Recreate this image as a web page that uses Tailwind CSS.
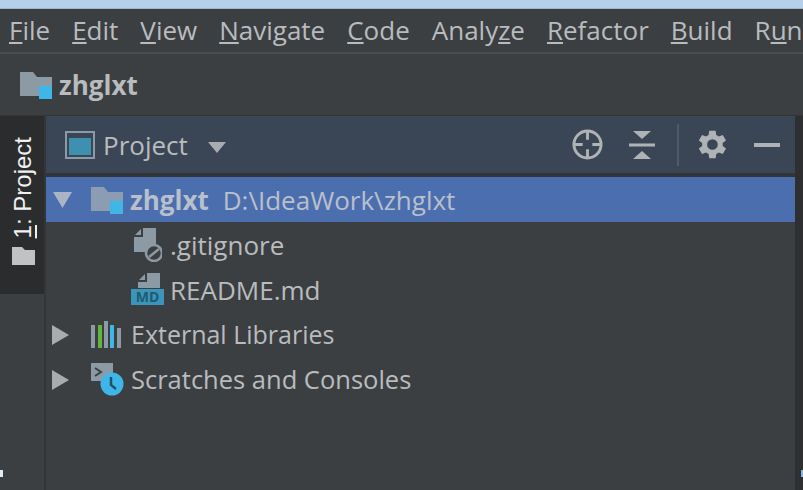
<!DOCTYPE html>
<html>
<head>
<title>zhglxt</title>
<script src="https://cdn.jsdelivr.net/npm/@tailwindcss/browser@4"></script>
</head>
<body class="relative w-[803px] h-[490px] overflow-hidden bg-[#3c3f41] font-['Open_Sans','Noto_Sans',sans-serif]">

<div class="h-[9px] bg-[#b7d0ea] border-b border-[#9fb6cc]"></div>

<!-- menu bar -->
<div class="h-[43px] pb-[2px] flex items-center pl-[9px] gap-[22px] text-[26px] leading-none text-[#b9bcbe] whitespace-nowrap overflow-hidden">
    <span><u class="underline-offset-2">F</u>ile</span>
    <span><u class="underline-offset-2">E</u>dit</span>
    <span><u class="underline-offset-2">V</u>iew</span>
    <span><u class="underline-offset-2">N</u>avigate</span>
    <span><u class="underline-offset-2">C</u>ode</span>
    <span>Analy<u class="underline-offset-2">z</u>e</span>
    <span><u class="underline-offset-2">R</u>efactor</span>
    <span><u class="underline-offset-2">B</u>uild</span>
    <span>R<u class="underline-offset-2">u</u>n</span>
</div>

<!-- nav bar -->
<div class="h-[64px] border-t-2 border-[#4a4c4e] flex items-center pl-[20px] gap-[5px] border-b border-b-[#323436]">
    <svg width="34" height="32" viewBox="0 0 34 32"><path d="M0 3h13l4 5h15v19H0z" fill="#8c9aa5"/><rect x="19" y="17" width="13" height="13" fill="#3fb6e8"/></svg>
    <span class="text-[26px] font-bold text-[#b9bcbe] leading-none">zhglxt</span>
</div>

<div class="flex h-[374px]">
    <!-- tool strip -->
    <div class="w-[46px] shrink-0 border-r-2 border-[#333537]">
        <div class="h-[178px] bg-[#2b2c2d] flex flex-col items-center justify-end pb-[29px] pl-[2px] gap-[9px]">
            <span class="[writing-mode:vertical-rl] rotate-180 font-['Liberation_Sans',sans-serif] text-[24px] leading-none text-[#f0f0f0] whitespace-nowrap"><u>1</u>: Project</span>
            <svg width="23" height="18" viewBox="0 0 23 18"><path d="M0 0h10l3 3h10v15H0z" fill="#c0c2c3"/></svg>
        </div>
    </div>

    <div class="w-[749px] shrink-0">
        <!-- panel header -->
        <div class="h-[57px] bg-[#3a4655] flex items-center pl-[19px] pr-[15px]">
            <svg width="30" height="28" viewBox="0 0 30 28"><rect x="1" y="1" width="28" height="26" fill="#3a4655" stroke="#8c9aa5" stroke-width="2"/><rect x="4" y="7" width="22" height="17" fill="#3f8fb0"/></svg>
            <span class="ml-[8px] text-[26px] leading-none text-[#b9bcbe]">Project</span>
            <svg class="ml-[20px] mt-[5px]" width="18" height="11" viewBox="0 0 18 11"><path d="M0 0h18L9 11z" fill="#a9acae"/></svg>
            <div class="ml-auto flex items-center">
                <svg width="31" height="31" viewBox="0 0 32 32" fill="none" stroke="#b0b3b5" stroke-width="3"><circle cx="16" cy="16" r="14"/><path d="M16 2v9M16 21v9M2 16h9M21 16h9"/></svg>
                <svg class="ml-[26px]" width="26" height="28" viewBox="0 0 26 28"><path d="M4 0h18l-9 8zM0 12.500h26v3H0zM4 28h18l-9-8z" fill="#b0b3b5"/></svg>
                <div class="ml-[22px] w-[2px] h-[42px] bg-[#4e5a67]"></div>
                <svg class="ml-[19px]" width="29" height="29" viewBox="3.500 2.500 18.500 19"><path fill="#b0b3b5" d="M19.400 13a7.600 7.600 0 0 0 0-2l2.200-1.700-2.100-3.600-2.600 1a7.500 7.500 0 0 0-1.700-1L14.800 3h-4.200l-.4 2.700a7.500 7.500 0 0 0-1.700 1l-2.600-1-2.100 3.600L6 11a7.600 7.600 0 0 0 0 2l-2.200 1.700 2.100 3.600 2.600-1a7.500 7.500 0 0 0 1.700 1l.4 2.700h4.200l.4-2.700a7.500 7.500 0 0 0 1.700-1l2.600 1 2.100-3.600zM12.700 15.500a3.500 3.500 0 1 1 0-7 3.500 3.500 0 0 1 0 7z"/></svg>
                <div class="ml-[27px] w-[26px] h-[4px] bg-[#b0b3b5]"></div>
            </div>
        </div>
        <div class="h-[4px] bg-[#323436]"></div>

        <!-- tree -->
        <div class="h-[45px] bg-[#4b6eaf] flex items-center pl-[7px] whitespace-nowrap">
            <svg width="19" height="16" viewBox="0 0 19 16"><path d="M0 0h19L9.500 16z" fill="#a9b4c4"/></svg>
            <svg class="ml-[19px]" width="34" height="32" viewBox="0 0 34 32"><path d="M0 3h13l4 5h15v19H0z" fill="#8c9cb3"/><rect x="19" y="17" width="13" height="13" fill="#3fb6e8"/></svg>
            <span class="ml-[5px] text-[26px] font-bold leading-none text-[#b9c0cc]">zhglxt</span>
            <span class="ml-[14px] text-[26px] leading-none text-[#b9c0cc]">D:\IdeaWork\zhglxt</span>
        </div>
        <div class="h-[45px] flex items-center pl-[88px] whitespace-nowrap">
            <svg width="28" height="34" viewBox="0 0 28 34"><path d="M9 0h13v24H0V9h9z" fill="#8c9aa5"/><path d="M7 1v6H1z" fill="#8c9aa5"/><circle cx="20" cy="25" r="8" fill="#3c3f41" stroke="#8c9aa5" stroke-width="2.500"/><path d="M15 29l10-8" stroke="#8c9aa5" stroke-width="2.500"/></svg>
            <span class="ml-[8px] text-[26px] leading-none text-[#b9bcbe]">.gitignore</span>
        </div>
        <div class="h-[45px] flex items-center pl-[85px] whitespace-nowrap">
            <div class="w-[33px] h-[33px] flex flex-col items-center">
                <svg class="ml-[3px]" width="22" height="15" viewBox="0 0 22 15"><path d="M9 0h13v15H0V9h9z" fill="#8c9aa5"/><path d="M7 1v6H1z" fill="#8c9aa5"/></svg>
                <div class="w-[33px] h-[16px] mt-[1px] bg-[#3a96b8] text-[14px] leading-[16px] font-bold text-[#1f5a72] text-center">MD</div>
            </div>
            <span class="ml-[6px] text-[26px] leading-none text-[#b9bcbe]">README.md</span>
        </div>
        <div class="h-[45px] flex items-center pl-[6px] whitespace-nowrap">
            <svg width="17" height="20" viewBox="0 0 17 20"><path d="M0 0l17 10L0 20z" fill="#a9acae"/></svg>
            <svg class="ml-[22px]" width="31" height="27" viewBox="0 0 31 27"><path d="M0 4h4v23H0zM26 7h4v20h-4z" fill="#8c9aa5"/><path d="M7 4h4v23H7z" fill="#63b53c"/><path d="M13 0h4v27h-4z" fill="#8c9aa5"/><path d="M19 4h4v23h-4z" fill="#3fb6e8"/></svg>
            <span class="ml-[9px] text-[25px] leading-none text-[#b9bcbe]">External Libraries</span>
        </div>
        <div class="h-[45px] flex items-center pl-[6px] whitespace-nowrap">
            <svg width="17" height="20" viewBox="0 0 17 20"><path d="M0 0l17 10L0 20z" fill="#a9acae"/></svg>
            <svg class="ml-[22px]" width="33" height="33" viewBox="0 0 33 33"><path d="M0 0h22v18H0z" fill="#8c9aa5"/><path d="M4 5l6 4-6 4" fill="none" stroke="#3c3f41" stroke-width="2"/><circle cx="21" cy="21" r="11.500" fill="#3fb6e8"/><path d="M20 14v8l5 4" fill="none" stroke="#23506a" stroke-width="2.500"/></svg>
            <span class="ml-[7px] text-[25.500px] leading-none text-[#b9bcbe]">Scratches and Consoles</span>
        </div>
    </div>

    <div class="w-[8px] shrink-0 bg-[#2e2f30]"></div>
</div>

<!-- stray selection marks at the screenshot edges -->
<div class="absolute left-0 top-[470px] w-[3px] h-[7px] bg-[#dcecf8]"></div>
<div class="absolute right-0 top-[470px] w-[2px] h-[7px] bg-[#8fb4d6]"></div>

</body>
</html>
